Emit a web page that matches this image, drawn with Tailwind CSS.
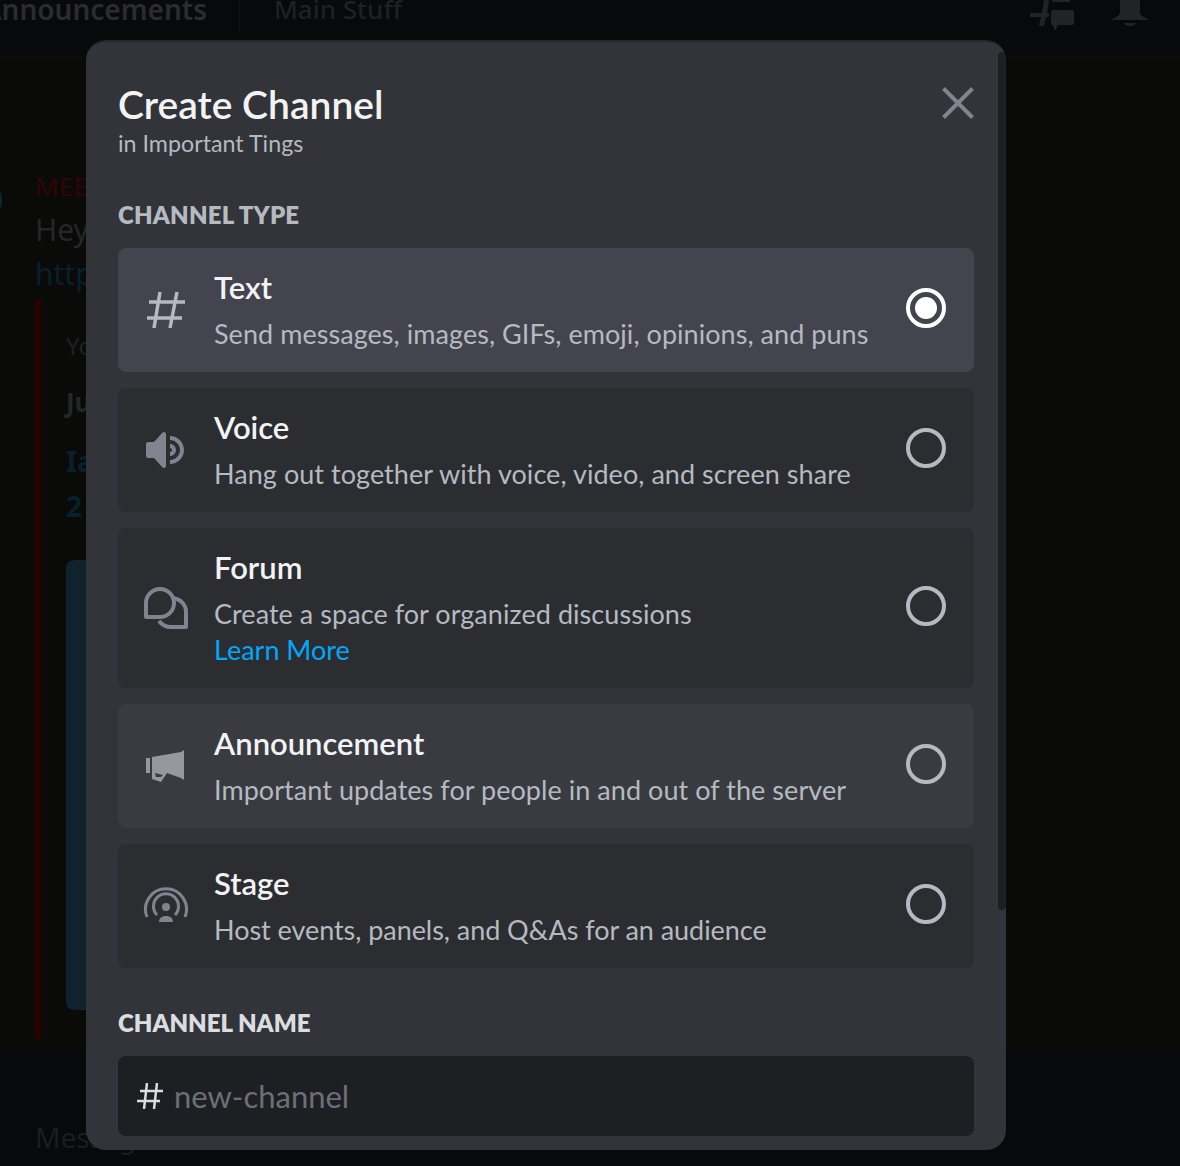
<!DOCTYPE html>
<html lang="en">
<head>
    <meta charset="UTF-8">
    <title>Create Channel</title>
    <script src="https://cdn.jsdelivr.net/npm/@tailwindcss/browser@4"></script>
</head>
<body class="relative w-[1180px] h-[1166px] overflow-hidden bg-[#0a0a08] font-['Lato',sans-serif]">

    <!-- chat behind the modal -->
    <div class="h-[58px] bg-[#07090a] border-b border-[#140a0a] flex items-start overflow-hidden">
        <div class="w-[240px] h-[32px] border-r border-[#101112] flex justify-end pr-[32px]">
            <span class="text-[28px] leading-[18px] font-['Noto_Sans',sans-serif] font-semibold text-[#2b2c2e]">Announcements</span>
        </div>
        <span class="ml-[34px] text-[26px] leading-[18px] font-['Noto_Sans',sans-serif] font-medium text-[#1f2022]">Main Stuff</span>
        <div class="ml-auto mr-[32px] flex gap-[38px]">
            <svg class="w-[44px] h-[32px]" viewBox="0 0 44 32" fill="#222326">
                <path d="M0 13h12L14 0h5l-2 13h2v4H16l-2 9H9l2-9H0zM22 0h18v2H22zM23 10h19a2 2 0 0 1 2 2v11a2 2 0 0 1-2 2H28l-3 6-2-6a2 2 0 0 1-2-2V12a2 2 0 0 1 2-2z"/>
            </svg>
            <svg class="w-[36px] h-[26px]" viewBox="0 0 36 26" fill="#222326">
                <path d="M8 0h20v12c0 3 3 5 8 7v1H0v-1c5-2 8-4 8-7zM12 23h12c-1 2-3 3-6 3s-5-1-6-3z"/>
            </svg>
        </div>
    </div>

    <div class="pl-[35px] pt-[114px] font-['Noto_Sans',sans-serif]">
        <p class="text-[26px] leading-[28px] font-medium text-[#2a0606]">MEE6</p>
        <p class="mt-[10px] text-[30px] leading-[40px] text-[#252628]">Hey</p>
        <p class="mt-[4px] text-[30px] leading-[40px] text-[#06202e]">https</p>
        <div class="mt-[5px] h-[740px] border-l-[6px] border-[#2b0000] rounded-l pl-[25px] pt-[32px]">
            <p class="text-[24px] leading-[30px] text-[#1f2022]">You</p>
            <p class="mt-[26px] text-[26px] leading-[30px] font-bold text-[#252628]">Just</p>
            <p class="mt-[29px] text-[28px] leading-[30px] font-bold text-[#08202e]">Ia</p>
            <p class="mt-[15px] text-[28px] leading-[30px] font-bold text-[#08202e]">2</p>
            <div class="mt-[39px] h-[450px] w-[60px] rounded-lg bg-[#0f222e]"></div>
        </div>
    </div>
    <div class="absolute left-[-38px] top-[180px] w-[40px] h-[40px] rounded-full border-[2px] border-[#0b2a38]"></div>
    <div class="absolute left-0 right-0 top-[1050px] bottom-0 bg-[#07090b] font-['Noto_Sans',sans-serif]">
        <p class="ml-[35px] mt-[71px] text-[28px] leading-[32px] text-[#1c1d1f]">Message</p>
    </div>

    <!-- modal -->
    <div class="absolute left-[86px] top-[40px] w-[920px] h-[1110px] rounded-[20px] bg-[#323439] border-t-2 border-[#26272b] overflow-hidden px-[32px] pt-[38px]">
        <div class="absolute right-0 top-[10px] w-[8px] h-[858px] rounded-full bg-[#1e1f22]"></div>

        <div class="flex justify-between">
            <div>
                <h1 class="text-[39px] leading-[48px] font-semibold text-[#f2f3f5]">Create Channel</h1>
                <p class="text-[23.250px] leading-[30px] text-[#b5bac1]">in Important Tings</p>
            </div>
            <svg class="w-[32px] h-[32px] mt-[7px]" viewBox="0 0 32 32" fill="none" stroke="#80848e" stroke-width="4">
                <path d="M1.500 1.500l29 29M30.500 1.500l-29 29"/>
            </svg>
        </div>

        <h2 class="mt-[43px] text-[24px] leading-[28px] tracking-[0.2px] font-extrabold text-[#b5bac1]">CHANNEL TYPE</h2>

        <div class="mt-[19px] flex flex-col gap-[16px]">

            <div class="h-[124px] rounded-lg bg-[#43444d] flex items-center pl-[24px] pr-[28px]">
                <svg class="w-[48px] h-[48px] shrink-0" viewBox="0 0 48 48" fill="none" stroke="#b5bac1" stroke-width="3.500">
                    <path d="M7 16h36M5 32h35M18 6l-6 36M35 6l-7 36"/>
                </svg>
                <div class="ml-[24px] flex-1 pb-[1px]">
                    <p class="text-[31px] leading-[40px] font-semibold text-[#f2f3f5]">Text</p>
                    <p class="mt-[9px] text-[27px] leading-[36px] tracking-[0.05px] text-[#b5bac1]">Send messages, images, GIFs, emoji, opinions, and puns</p>
                </div>
                <div class="mb-[4px] w-[40px] h-[40px] rounded-full border-[4px] border-white flex items-center justify-center">
                    <div class="w-[22px] h-[22px] rounded-full bg-white"></div>
                </div>
            </div>

            <div class="h-[124px] rounded-lg bg-[#2b2d31] flex items-center pl-[24px] pr-[28px]">
                <svg class="w-[48px] h-[48px] shrink-0" viewBox="0 0 24 24" fill="#80848e">
                    <path d="M11.383 3.07904C11.009 2.92504 10.579 3.01004 10.293 3.29604L6 8.00204H3C2.45 8.00204 2 8.45304 2 9.00204V15.002C2 15.552 2.45 16.002 3 16.002H6L10.293 20.71C10.579 20.996 11.009 21.082 11.383 20.927C11.757 20.772 12 20.407 12 20.002V4.00204C12 3.59904 11.757 3.23204 11.383 3.07904ZM14 5.00195V7.00195C16.757 7.00195 19 9.24595 19 12.002C19 14.759 16.757 17.002 14 17.002V19.002C17.86 19.002 21 15.863 21 12.002C21 8.14295 17.86 5.00195 14 5.00195ZM14 9.00195C15.654 9.00195 17 10.349 17 12.002C17 13.657 15.654 15.002 14 15.002V13.002C14.551 13.002 15 12.553 15 12.002C15 11.451 14.551 11.002 14 11.002V9.00195Z"/>
                </svg>
                <div class="ml-[24px] flex-1 pb-[1px]">
                    <p class="text-[31px] leading-[40px] font-semibold text-[#f2f3f5]">Voice</p>
                    <p class="mt-[9px] text-[27px] leading-[36px] tracking-[0.05px] text-[#b5bac1]">Hang out together with voice, video, and screen share</p>
                </div>
                <div class="mb-[4px] w-[40px] h-[40px] rounded-full border-[4px] border-[#b5bac1]"></div>
            </div>

            <div class="h-[160px] rounded-lg bg-[#2b2d31] flex items-center pl-[24px] pr-[28px]">
                <svg class="w-[48px] h-[48px] shrink-0" viewBox="0 0 48 48" fill="none" stroke="#80848e" stroke-width="4" stroke-linejoin="round">
                    <path d="M4 33V19A14 14 0 1 1 18 33Z"/>
                    <path d="M31 14C38 15 44 20 44 28V43H29C24 43 20 41 17 37"/>
                </svg>
                <div class="ml-[24px] flex-1 pb-[1px]">
                    <p class="text-[31px] leading-[40px] font-semibold text-[#f2f3f5]">Forum</p>
                    <p class="mt-[9px] text-[27px] leading-[36px] tracking-[0.05px] text-[#b5bac1]">Create a space for organized discussions</p>
                    <p class="text-[27px] leading-[36px] text-[#00a8fc]">Learn More</p>
                </div>
                <div class="mb-[4px] w-[40px] h-[40px] rounded-full border-[4px] border-[#b5bac1]"></div>
            </div>

            <div class="h-[124px] rounded-lg bg-[#393b41] flex items-center pl-[24px] pr-[28px]">
                <svg class="w-[48px] h-[48px] shrink-0" viewBox="0 0 48 48" fill="#96989d" fill-rule="evenodd">
                    <path d="M4 16h4v15H4zM10 15L39 10 42 8V38L39 36 25 31 19 40 10 37ZM13 31L21 33 19 35 14 35Z"/>
                </svg>
                <div class="ml-[24px] flex-1 pb-[1px]">
                    <p class="text-[31px] leading-[40px] font-semibold text-[#f2f3f5]">Announcement</p>
                    <p class="mt-[9px] text-[27px] leading-[36px] tracking-[0.05px] text-[#b5bac1]">Important updates for people in and out of the server</p>
                </div>
                <div class="mb-[4px] w-[40px] h-[40px] rounded-full border-[4px] border-[#b5bac1]"></div>
            </div>

            <div class="h-[124px] rounded-lg bg-[#2b2d31] flex items-center pl-[24px] pr-[28px]">
                <svg class="w-[48px] h-[48px] shrink-0" viewBox="0 0 48 48" fill="none" stroke="#80848e" stroke-width="3">
                    <path d="M5 35A20.500 20.500 0 1 1 43 35"/>
                    <path d="M15 33A12.500 12.500 0 1 1 33 33"/>
                    <circle cx="24" cy="25" r="4" fill="#80848e" stroke="none"/>
                    <path d="M17 40C17 36 20 34 24 34C28 34 31 36 31 40Z" fill="#80848e" stroke="none"/>
                </svg>
                <div class="ml-[24px] flex-1 pb-[1px]">
                    <p class="text-[31px] leading-[40px] font-semibold text-[#f2f3f5]">Stage</p>
                    <p class="mt-[9px] text-[27px] leading-[36px] tracking-[-0.05px] text-[#b5bac1]">Host events, panels, and Q&amp;As for an audience</p>
                </div>
                <div class="mb-[4px] w-[40px] h-[40px] rounded-full border-[4px] border-[#b5bac1]"></div>
            </div>
        </div>

        <h2 class="mt-[41px] text-[24px] leading-[28px] font-extrabold text-[#dbdee1]">CHANNEL NAME</h2>

        <div class="mt-[19px] h-[80px] rounded-lg bg-[#1e1f22] flex items-center pl-[19px]">
            <svg class="w-[26px] h-[26px]" viewBox="0 0 26 26" fill="none" stroke="#dbdee1" stroke-width="2.500">
                <path d="M3 8h23M0 18h23M10 0L7 26M20 0l-3 26"/>
            </svg>
            <span class="ml-[11px] text-[31px] leading-[40px] text-[#6d6f78]">new-channel</span>
        </div>
    </div>
</body>
</html>
